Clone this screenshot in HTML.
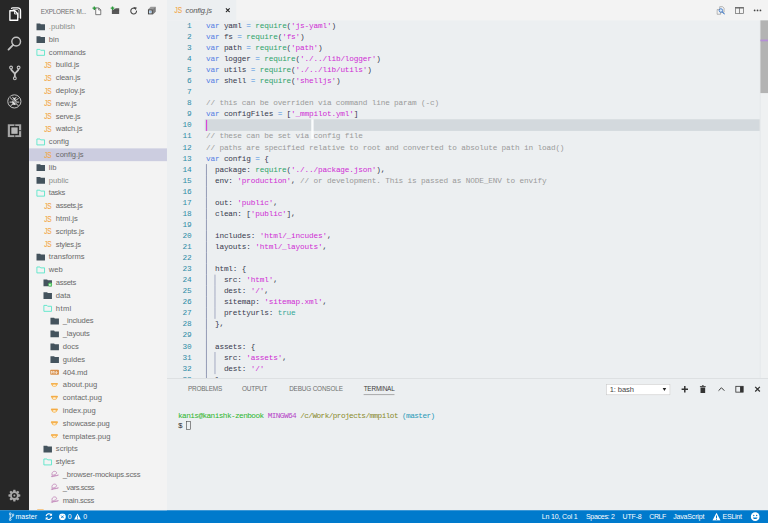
<!DOCTYPE html>
<html lang="en">
<head>
<meta charset="utf-8">
<title>config.js - mmpilot - Visual Studio Code</title>
<style>
html,body{margin:0;padding:0;background:#eceff1;overflow:hidden;}
body{width:768px;height:523px;position:relative;font-family:"Liberation Sans",sans-serif;}
#app{position:absolute;left:0;top:0;width:1320px;height:899px;transform:scale(0.581818);transform-origin:0 0;overflow:hidden;background:#eceff1;}
#app *{box-sizing:border-box;}
/* activity bar */
#act{position:absolute;left:0;top:0;width:50px;height:877px;background:#272727;}
#act svg{position:absolute;left:0;width:50px;height:50px;}
/* sidebar */
#side{position:absolute;left:50px;top:0;width:237px;z-index:2;height:877px;background:#f3f3f3;overflow:hidden;}
#side .title{position:absolute;left:20px;top:2.500px;height:35px;line-height:35px;font-size:11px;color:#6f6f6f;letter-spacing:-0.45px;}
#side .acts{position:absolute;left:0;top:0;height:35px;}
#side .acts svg{position:absolute;top:10.500px;width:16px;height:16px;overflow:visible;}
#tree{position:absolute;left:0;top:35px;width:237px;}
.row{height:22px;line-height:22px;font-size:13px;color:#696969;white-space:nowrap;position:relative;}
.row.sel{background:#cccde0;}.row.dim{color:#8a8e8a;}
.row .ic{display:inline-block;width:16px;height:22px;vertical-align:top;margin-right:6px;}
.row svg.ic{padding:3px 0;}
.row .jsic{font-size:14.500px;color:#f2a94a;letter-spacing:-0.300px;text-align:left;padding-left:2px;transform:scaleX(0.77);transform-origin:2px 50%;-webkit-text-stroke:0.200px #f2a94a;}
.row .lbl{display:inline-block;vertical-align:top;}
/* editor */
#ed{position:absolute;left:286px;top:0;width:1034px;height:650px;background:#eceff1;overflow:hidden;}
#tabs{position:absolute;left:0;top:0;width:1034px;height:35px;background:#f3f3f3;}
#tabs .tab{position:absolute;left:0;top:0;width:120px;height:35px;line-height:35px;font-size:13px;font-style:italic;color:#5a5a5a;padding-left:14px;white-space:nowrap;background:#eceff1;letter-spacing:-0.300px;}
#tabs .tab .jsic{font-style:normal;font-size:14.500px;color:#f2a94a;display:inline-block;width:16px;margin-right:3px;letter-spacing:-0.300px;transform:scaleX(0.77);transform-origin:0 50%;-webkit-text-stroke:0.200px #f2a94a;}
#tabs .close{position:absolute;left:101px;top:13px;width:9px;height:9px;}
#tabs .tacts svg{position:absolute;top:10px;width:16px;height:16px;}
#code{position:absolute;left:0;top:35.400px;width:1020px;font-family:"Liberation Mono",monospace;font-size:13.300px;letter-spacing:-0.280px;color:#383a4e;}
.ln{height:19px;line-height:19px;white-space:pre;position:relative;}
.ln.cur:before{content:"";position:absolute;left:66px;right:0;top:-1px;height:20px;background:#d3d9dd;}
.ln .n{position:absolute;left:0;top:0;width:43px;text-align:right;color:#2e8ba6;}
.ln .t{position:absolute;left:68px;top:0;}
.ln .g{position:absolute;top:0;width:1.200px;height:19px;background:#56608a;}.ln .g2{width:1.100px;background:#737aa0;}
.k{color:#5580e4}.o{color:#4a8fe0}.f{color:#2fa36b}.s{color:#cf2cd4}.c{color:#9a9a9a}.b{color:#35a896}
#cursor{position:absolute;left:68px;top:205.500px;width:2px;height:19px;background:#d946d9;}
#ibeam{position:absolute;left:248.500px;top:205px;width:4px;height:34px;background:#fafcfd;}
#vsb{position:absolute;right:0;top:35px;width:14px;height:615px;background:#eff1f2;border-left:1px solid #dfe3e5;}
#vsb .sl{position:absolute;left:0;top:0;width:14px;height:124.500px;background:#b3b3b3;}
#vsb .mk{position:absolute;left:0;top:33px;width:14px;height:3px;background:#b58fd6;}
/* panel */
#panel{position:absolute;left:286px;top:650px;width:1034px;height:227px;background:#eceff1;border-top:1px solid #d2d5d7;}
#panel .ptabs{position:absolute;left:0;top:0;height:35px;}
#panel .ptabs span{position:absolute;top:0;height:35px;line-height:35px;font-size:11px;color:#6f6f6f;white-space:nowrap;letter-spacing:-0.300px;}
#panel .ptabs span.on{color:#3c3c3c;}
#panel .ptabs span.on:after{content:"";position:absolute;left:0;right:0;bottom:7px;height:1px;background:#7a7a7a;}
#term{position:absolute;left:20px;top:56.500px;font-family:"Liberation Mono",monospace;font-size:13.300px;letter-spacing:-0.980px;line-height:16px;white-space:pre;color:#333;}
#term .box{display:inline-block;width:8.500px;height:15.500px;border:1.200px solid #444;vertical-align:-3.500px;margin-left:-0.500px;}
#sel{position:absolute;left:756px;top:9px;width:110px;height:19px;background:#fff;border:1px solid #c8c8c8;font-size:13px;line-height:17px;color:#444;padding-left:5px;letter-spacing:-0.200px;}
#sel:after{content:"";position:absolute;right:6px;top:6px;border:3.500px solid transparent;border-top:5.500px solid #222;}
#panel .pacts svg{position:absolute;top:10px;width:16px;height:16px;}
/* status */
#status{position:absolute;left:0;top:877px;width:1320px;height:22px;background:#007acc;color:#fff;font-size:12px;line-height:22px;white-space:nowrap;letter-spacing:-0.250px;}
#status span{position:absolute;top:0;}
#status svg{position:absolute;}
</style>
</head>
<body>
<div id="app">
 <div id="act">
  <svg style="top:0" viewBox="0 0 50 50"><path d="M17 18.500h8.500l5 5V34.800H17z" fill="none" stroke="#fff" stroke-width="2.300" stroke-linejoin="round"/><path d="M25 18.800v5.200h5.200" fill="none" stroke="#fff" stroke-width="1.500"/><path d="M19.800 14.200c.6-.5 1.300-.7 2.200-.7h8.300c2.900 0 5.100 2.200 5.100 5.100v12.600" fill="none" stroke="#fff" stroke-width="2" stroke-linecap="round"/><path d="M22.500 16.400h6.800c2 0 3.300 1.300 3.300 3.300v10.500" fill="none" stroke="#fff" stroke-width="1.300" stroke-linecap="round" opacity=".9"/></svg>
  <svg style="top:50px" viewBox="0 0 50 50"><circle cx="27.800" cy="21.500" r="7.500" fill="none" stroke="#c2c2c2" stroke-width="2.500"/><path d="M22.600 27L14.600 35.200" stroke="#c2c2c2" stroke-width="3.100" stroke-linecap="round"/></svg>
  <svg style="top:100px" viewBox="0 0 50 50"><g fill="none" stroke="#c2c2c2"><path d="M19 18.300c.4 5 6.500 5 6.500 9.700v4.300M32 18.300c-.4 5-6.500 5-6.500 9.700" stroke-width="3"/><circle cx="19" cy="16" r="2.400" stroke-width="1.900" fill="#272727"/><circle cx="32" cy="16" r="2.400" stroke-width="1.900" fill="#272727"/><circle cx="25.500" cy="34.600" r="2.400" stroke-width="1.900" fill="#272727"/></g></svg>
  <svg style="top:150px" viewBox="0 0 50 50"><circle cx="24.700" cy="24.300" r="11.300" fill="none" stroke="#c2c2c2" stroke-width="1.700"/><g stroke="#d8d8d8" stroke-width="1.700" fill="none"><path d="M17.500 19l5 3.500M32 19l-5 3.500M16.500 25.500h6M33 25.500h-6M18 32l4.500-3.500M31.500 32L27 28.500M21.500 16.500l2 3M28 16.500l-2 3"/></g><ellipse cx="24.700" cy="25.800" rx="3.600" ry="4.800" fill="#e0e0e0"/><circle cx="24.700" cy="20" r="2.200" fill="#e0e0e0"/><path d="M16.700 16.400l16 15.800" stroke="#272727" stroke-width="2.200"/><path d="M16.700 16.400l16 15.800" stroke="#c2c2c2" stroke-width="1.100"/></svg>
  <svg style="top:200px" viewBox="0 0 50 50"><rect x="13.400" y="13.600" width="23" height="22" fill="#a4a4a4"/><rect x="18.300" y="17.800" width="13.200" height="13.400" fill="none" stroke="#272727" stroke-width="2.400"/><rect x="20.200" y="19.700" width="9.400" height="9.600" fill="#b8b8b8"/><path d="M25.400 13.600v4M25.400 31.500v4.100M32 24.500h4.400" stroke="#272727" stroke-width="1.400"/></svg>
  <svg style="top:827px" viewBox="0 0 50 50"><g transform="translate(24.700 24.800)"><g fill="#a8a8a8"><path d="M-2.600 -6L-1.700 -10.200H1.700L2.600 -6z"/><path d="M-2.600 -6L-1.700 -10.200H1.700L2.600 -6z" transform="rotate(45)"/><path d="M-2.600 -6L-1.700 -10.200H1.700L2.600 -6z" transform="rotate(90)"/><path d="M-2.600 -6L-1.700 -10.200H1.700L2.600 -6z" transform="rotate(135)"/><path d="M-2.600 -6L-1.700 -10.200H1.700L2.600 -6z" transform="rotate(180)"/><path d="M-2.600 -6L-1.700 -10.200H1.700L2.600 -6z" transform="rotate(225)"/><path d="M-2.600 -6L-1.700 -10.200H1.700L2.600 -6z" transform="rotate(270)"/><path d="M-2.600 -6L-1.700 -10.200H1.700L2.600 -6z" transform="rotate(315)"/><circle r="7.200"/></g><circle r="4.300" fill="#272727"/><circle r="1.700" fill="#a8a8a8"/></g></svg>
 </div>
 <div id="side">
  <div class="title">EXPLORER: M...</div>
  <div class="acts">
   <svg style="left:109px" viewBox="0 0 16 16"><path d="M5.500 2.600h5.300l3.400 3.400v8.200H5.500z" fill="#fbfbfb" stroke="#555" stroke-width="1.300" stroke-linejoin="round"/><path d="M10.600 2.800v3.400h3.400" fill="none" stroke="#555" stroke-width="1.200"/><path d="M3.100 0v6.200M0 3.100h6.200" stroke="#2c9a3c" stroke-width="2.300"/></svg>
   <svg style="left:141px" viewBox="0 0 16 16"><path d="M1.300 13.100V7.200L8.200 3h5.600v10.100z" fill="#585858"/><path d="M1.300 7.400h12.500" stroke="#4a4a4a" stroke-width="0.800"/><path d="M2.400 0v6.200M-0.700 3.100h6.200" stroke="#2c9a3c" stroke-width="2.300"/></svg>
   <svg style="left:172px" viewBox="0 0 16 16"><path d="M10.500 3.800A5 5 0 1 0 12.700 7.300" fill="none" stroke="#484848" stroke-width="1.900"/><path d="M7.400 1l5.600.8-1.600 4.800z" fill="#484848"/></svg>
   <svg style="left:203px" viewBox="0 0 16 16"><path d="M1.300 5.300l4.600-4.600h8.500v8.600l-4.600 4.500z" fill="#9a9a9a"/><path d="M9.400 5.300l5-4.600v8.600l-5 4.500z" fill="#7d7d7d"/><rect x="1.300" y="5.300" width="8.100" height="8.400" fill="#444"/><rect x="3" y="7" width="4.700" height="5" fill="#fff"/><path d="M3.600 9.500h3.500" stroke="#2f7fd0" stroke-width="1.500"/></svg>
  </div>
  <div style="position:absolute;left:14px;top:875.300px;width:11px;height:1.700px;background:#f5c27e"></div>
  <div id="tree">
<div class="row dim" style="padding-left:12px"><svg class="ic" viewBox="0 0 16 16"><path d="M0.700 2.200h6.300l1.200 1.400h7.100V13.800H0.700z" fill="#44535d"/></svg><span class="lbl">.publish</span></div>
<div class="row" style="padding-left:12px"><svg class="ic" viewBox="0 0 16 16"><path d="M0.700 2.200h6.300l1.200 1.400h7.100V13.800H0.700z" fill="#44535d"/></svg><span class="lbl">bin</span></div>
<div class="row" style="padding-left:12px"><svg class="ic" viewBox="0 0 16 16"><path d="M1.400 2.900h5.300l1.200 1.500h6.700V13.100H1.400z" fill="none" stroke="#5ce6ca" stroke-width="1.600" stroke-linejoin="round"/></svg><span class="lbl">commands</span></div>
<div class="row" style="padding-left:24px"><span class="ic jsic">JS</span><span class="lbl">build.js</span></div>
<div class="row" style="padding-left:24px"><span class="ic jsic">JS</span><span class="lbl" style="letter-spacing:-0.25px">clean.js</span></div>
<div class="row" style="padding-left:24px"><span class="ic jsic">JS</span><span class="lbl">deploy.js</span></div>
<div class="row" style="padding-left:24px"><span class="ic jsic">JS</span><span class="lbl">new.js</span></div>
<div class="row" style="padding-left:24px"><span class="ic jsic">JS</span><span class="lbl" style="letter-spacing:-0.34px">serve.js</span></div>
<div class="row" style="padding-left:24px"><span class="ic jsic">JS</span><span class="lbl" style="letter-spacing:-0.18px">watch.js</span></div>
<div class="row" style="padding-left:12px"><svg class="ic" viewBox="0 0 16 16"><path d="M1.400 2.900h5.300l1.200 1.500h6.700V13.100H1.400z" fill="none" stroke="#5ce6ca" stroke-width="1.600" stroke-linejoin="round"/></svg><span class="lbl">config</span></div>
<div class="row sel" style="padding-left:24px"><span class="ic jsic">JS</span><span class="lbl">config.js</span></div>
<div class="row" style="padding-left:12px"><svg class="ic" viewBox="0 0 16 16"><path d="M0.700 2.200h6.300l1.200 1.400h7.100V13.800H0.700z" fill="#44535d"/></svg><span class="lbl">lib</span></div>
<div class="row dim" style="padding-left:12px"><svg class="ic" viewBox="0 0 16 16"><path d="M0.700 2.200h6.300l1.200 1.400h7.100V13.800H0.700z" fill="#44535d"/></svg><span class="lbl">public</span></div>
<div class="row" style="padding-left:12px"><svg class="ic" viewBox="0 0 16 16"><path d="M1.400 2.900h5.300l1.200 1.500h6.700V13.100H1.400z" fill="none" stroke="#5ce6ca" stroke-width="1.600" stroke-linejoin="round"/></svg><span class="lbl" style="letter-spacing:-0.49px">tasks</span></div>
<div class="row" style="padding-left:24px"><span class="ic jsic">JS</span><span class="lbl" style="letter-spacing:-0.56px">assets.js</span></div>
<div class="row" style="padding-left:24px"><span class="ic jsic">JS</span><span class="lbl">html.js</span></div>
<div class="row" style="padding-left:24px"><span class="ic jsic">JS</span><span class="lbl" style="letter-spacing:-0.2px">scripts.js</span></div>
<div class="row" style="padding-left:24px"><span class="ic jsic">JS</span><span class="lbl" style="letter-spacing:-0.36px">styles.js</span></div>
<div class="row" style="padding-left:12px"><svg class="ic" viewBox="0 0 16 16"><path d="M0.700 2.200h6.300l1.200 1.400h7.100V13.800H0.700z" fill="#44535d"/></svg><span class="lbl">transforms</span></div>
<div class="row" style="padding-left:12px"><svg class="ic" viewBox="0 0 16 16"><path d="M1.400 2.900h5.300l1.200 1.500h6.700V13.100H1.400z" fill="none" stroke="#5ce6ca" stroke-width="1.600" stroke-linejoin="round"/></svg><span class="lbl">web</span></div>
<div class="row" style="padding-left:24px"><svg class="ic" viewBox="0 0 16 16"><path d="M0.700 2.200h6.300l1.200 1.400h7.100V13.800H0.700z" fill="#44535d"/><circle cx="12.300" cy="11.200" r="3.600" fill="#55c763"/><circle cx="11.800" cy="11.600" r="1.500" fill="#eefaf0"/></svg><span class="lbl" style="letter-spacing:-0.53px">assets</span></div>
<div class="row" style="padding-left:24px"><svg class="ic" viewBox="0 0 16 16"><path d="M0.700 2.200h6.300l1.200 1.400h7.100V13.800H0.700z" fill="#44535d"/></svg><span class="lbl">data</span></div>
<div class="row" style="padding-left:24px"><svg class="ic" viewBox="0 0 16 16"><path d="M1.400 2.900h5.300l1.200 1.500h6.700V13.100H1.400z" fill="none" stroke="#5ce6ca" stroke-width="1.600" stroke-linejoin="round"/></svg><span class="lbl" style="letter-spacing:0.64px">html</span></div>
<div class="row" style="padding-left:36px"><svg class="ic" viewBox="0 0 16 16"><path d="M0.700 2.200h6.300l1.200 1.400h7.100V13.800H0.700z" fill="#44535d"/></svg><span class="lbl" style="letter-spacing:-0.28px">_includes</span></div>
<div class="row" style="padding-left:36px"><svg class="ic" viewBox="0 0 16 16"><path d="M0.700 2.200h6.300l1.200 1.400h7.100V13.800H0.700z" fill="#44535d"/></svg><span class="lbl" style="letter-spacing:-0.3px">_layouts</span></div>
<div class="row" style="padding-left:36px"><svg class="ic" viewBox="0 0 16 16"><path d="M0.700 2.200h6.300l1.200 1.400h7.100V13.800H0.700z" fill="#44535d"/></svg><span class="lbl">docs</span></div>
<div class="row" style="padding-left:36px"><svg class="ic" viewBox="0 0 16 16"><path d="M0.700 2.200h6.300l1.200 1.400h7.100V13.800H0.700z" fill="#44535d"/></svg><span class="lbl">guides</span></div>
<div class="row" style="padding-left:36px"><svg class="ic" viewBox="0 0 16 16"><rect x="0.300" y="3.700" width="15" height="8.600" rx="1.300" fill="#d9914c"/><path d="M2.800 10.200V5.900l2 2.300 2-2.300v4.300M10.800 5.800v3.800M8.900 8l1.900 2.100L12.700 8" stroke="#fff" stroke-width="1.300" fill="none"/></svg><span class="lbl" style="letter-spacing:-0.21px">404.md</span></div>
<div class="row" style="padding-left:36px"><svg class="ic" viewBox="0 0 16 16"><path d="M1.500 5.200c0-.7.400-1 1.200-1h9.600c.8 0 1.200.3 1.200 1v1.300c0 .6-.5.900-1.300 1-.3 2.200-1.900 3.700-4.700 3.700s-4.400-1.500-4.700-3.700c-.8-.1-1.300-.4-1.300-1z" fill="#f7ba5e"/><path d="M2 5h11v1.200H2z" fill="#f2a640"/><ellipse cx="7.500" cy="8.400" rx="2.600" ry="1.500" fill="#fdeccd"/></svg><span class="lbl" style="letter-spacing:0.16px">about.pug</span></div>
<div class="row" style="padding-left:36px"><svg class="ic" viewBox="0 0 16 16"><path d="M1.500 5.200c0-.7.400-1 1.200-1h9.600c.8 0 1.200.3 1.200 1v1.300c0 .6-.5.900-1.300 1-.3 2.200-1.900 3.700-4.700 3.700s-4.400-1.500-4.700-3.700c-.8-.1-1.300-.4-1.300-1z" fill="#f7ba5e"/><path d="M2 5h11v1.200H2z" fill="#f2a640"/><ellipse cx="7.500" cy="8.400" rx="2.600" ry="1.500" fill="#fdeccd"/></svg><span class="lbl">contact.pug</span></div>
<div class="row" style="padding-left:36px"><svg class="ic" viewBox="0 0 16 16"><path d="M1.500 5.200c0-.7.400-1 1.200-1h9.600c.8 0 1.200.3 1.200 1v1.300c0 .6-.5.900-1.300 1-.3 2.200-1.900 3.700-4.700 3.700s-4.400-1.500-4.700-3.700c-.8-.1-1.300-.4-1.300-1z" fill="#f7ba5e"/><path d="M2 5h11v1.200H2z" fill="#f2a640"/><ellipse cx="7.500" cy="8.400" rx="2.600" ry="1.500" fill="#fdeccd"/></svg><span class="lbl">index.pug</span></div>
<div class="row" style="padding-left:36px"><svg class="ic" viewBox="0 0 16 16"><path d="M1.500 5.200c0-.7.400-1 1.200-1h9.600c.8 0 1.200.3 1.200 1v1.300c0 .6-.5.900-1.300 1-.3 2.200-1.900 3.700-4.700 3.700s-4.400-1.500-4.700-3.700c-.8-.1-1.300-.4-1.300-1z" fill="#f7ba5e"/><path d="M2 5h11v1.200H2z" fill="#f2a640"/><ellipse cx="7.500" cy="8.400" rx="2.600" ry="1.500" fill="#fdeccd"/></svg><span class="lbl" style="letter-spacing:-0.23px">showcase.pug</span></div>
<div class="row" style="padding-left:36px"><svg class="ic" viewBox="0 0 16 16"><path d="M1.500 5.200c0-.7.400-1 1.200-1h9.600c.8 0 1.200.3 1.200 1v1.300c0 .6-.5.900-1.300 1-.3 2.200-1.900 3.700-4.700 3.700s-4.400-1.500-4.700-3.700c-.8-.1-1.300-.4-1.300-1z" fill="#f7ba5e"/><path d="M2 5h11v1.200H2z" fill="#f2a640"/><ellipse cx="7.500" cy="8.400" rx="2.600" ry="1.500" fill="#fdeccd"/></svg><span class="lbl">templates.pug</span></div>
<div class="row" style="padding-left:24px"><svg class="ic" viewBox="0 0 16 16"><path d="M0.700 2.200h6.300l1.200 1.400h7.100V13.800H0.700z" fill="#44535d"/></svg><span class="lbl">scripts</span></div>
<div class="row" style="padding-left:24px"><svg class="ic" viewBox="0 0 16 16"><path d="M1.400 2.900h5.300l1.200 1.500h6.700V13.100H1.400z" fill="none" stroke="#5ce6ca" stroke-width="1.600" stroke-linejoin="round"/></svg><span class="lbl" style="letter-spacing:-0.17px">styles</span></div>
<div class="row" style="padding-left:36px"><svg class="ic" viewBox="0 0 16 16"><path d="M3.400 7.600C2.300 5.200 4.700 2 7.800 2.100c2.500.1 4 1.700 3.300 3.500C10.500 7.200 8.200 7.900 6.300 8.200" stroke="#c48cbc" stroke-width="1.500" fill="none" stroke-linecap="round"/><path d="M3.400 7.600c.9 1.200 .4 2.300-1 3.500 3-1.700 7.500-1.300 12-2.600-3.800 1.900-8.300 1.300-11.200 3.100" stroke="#c48cbc" stroke-width="1.300" fill="#c48cbc" stroke-linejoin="round"/></svg><span class="lbl" style="letter-spacing:-0.3px">_browser-mockups.scss</span></div>
<div class="row" style="padding-left:36px"><svg class="ic" viewBox="0 0 16 16"><path d="M3.400 7.600C2.300 5.200 4.700 2 7.800 2.100c2.500.1 4 1.700 3.300 3.500C10.500 7.200 8.200 7.900 6.300 8.200" stroke="#c48cbc" stroke-width="1.500" fill="none" stroke-linecap="round"/><path d="M3.400 7.600c.9 1.200 .4 2.300-1 3.500 3-1.700 7.500-1.300 12-2.600-3.800 1.900-8.300 1.300-11.200 3.100" stroke="#c48cbc" stroke-width="1.300" fill="#c48cbc" stroke-linejoin="round"/></svg><span class="lbl" style="letter-spacing:-0.77px">_vars.scss</span></div>
<div class="row" style="padding-left:36px"><svg class="ic" viewBox="0 0 16 16"><path d="M3.400 7.600C2.300 5.200 4.700 2 7.800 2.100c2.500.1 4 1.700 3.300 3.500C10.500 7.200 8.200 7.900 6.300 8.200" stroke="#c48cbc" stroke-width="1.500" fill="none" stroke-linecap="round"/><path d="M3.400 7.600c.9 1.200 .4 2.300-1 3.500 3-1.700 7.500-1.300 12-2.600-3.800 1.900-8.300 1.300-11.200 3.100" stroke="#c48cbc" stroke-width="1.300" fill="#c48cbc" stroke-linejoin="round"/></svg><span class="lbl" style="letter-spacing:-0.46px">main.scss</span></div>
  </div>
 </div>
 <div id="ed">
  <div id="tabs">
   <div class="tab"><span class="jsic">JS</span>config.js</div>
   <svg class="close" viewBox="0 0 11 11"><path d="M1.500 1.500l8 8M9.500 1.500l-8 8" stroke="#222" stroke-width="2.200"/></svg>
   <div class="tacts">
    <svg style="left:945px" viewBox="0 0 16 16"><path d="M6 1.500h5l2.500 2.500v7H6z" fill="#f3f3f3" stroke="#888" stroke-width="1"/><path d="M1.500 6.500h6v8h-6z" fill="#f3f3f3" stroke="#888" stroke-width="1"/><circle cx="8" cy="8" r="3" fill="#dfeaf7" stroke="#3c78c8" stroke-width="1.500"/><path d="M10.200 10.200l4.300 4.300" stroke="#3c78c8" stroke-width="1.800"/></svg>
    <svg style="left:977px" viewBox="0 0 16 16"><rect x="1" y="2.800" width="14" height="10.400" fill="none" stroke="#666" stroke-width="1.200"/><path d="M1 3.500h14" stroke="#666" stroke-width="2"/><path d="M8 3v10" stroke="#666" stroke-width="1.300"/></svg>
    <svg style="left:1008px" viewBox="0 0 16 16"><circle cx="3" cy="8" r="1.500" fill="#444"/><circle cx="8" cy="8" r="1.500" fill="#444"/><circle cx="13" cy="8" r="1.500" fill="#444"/></svg>
   </div>
  </div>
  <div id="code">
<div class="ln"><span class="n">1</span><span class="t"><span class="k">var</span> yaml <span class="o">=</span> <span class="f">require</span>(<span class="s">'js-yaml'</span>)</span></div>
<div class="ln"><span class="n">2</span><span class="t"><span class="k">var</span> fs <span class="o">=</span> <span class="f">require</span>(<span class="s">'fs'</span>)</span></div>
<div class="ln"><span class="n">3</span><span class="t"><span class="k">var</span> path <span class="o">=</span> <span class="f">require</span>(<span class="s">'path'</span>)</span></div>
<div class="ln"><span class="n">4</span><span class="t"><span class="k">var</span> logger <span class="o">=</span> <span class="f">require</span>(<span class="s">'./../lib/logger'</span>)</span></div>
<div class="ln"><span class="n">5</span><span class="t"><span class="k">var</span> utils <span class="o">=</span> <span class="f">require</span>(<span class="s">'./../lib/utils'</span>)</span></div>
<div class="ln"><span class="n">6</span><span class="t"><span class="k">var</span> shell <span class="o">=</span> <span class="f">require</span>(<span class="s">'shelljs'</span>)</span></div>
<div class="ln"><span class="n">7</span><span class="t"></span></div>
<div class="ln"><span class="n">8</span><span class="t"><span class="c">// this can be overriden via command line param (-c)</span></span></div>
<div class="ln"><span class="n">9</span><span class="t"><span class="k">var</span> configFiles <span class="o">=</span> [<span class="s">'_mmpilot.yml'</span>]</span></div>
<div class="ln cur"><span class="n">10</span><span class="t"></span></div>
<div class="ln"><span class="n">11</span><span class="t"><span class="c">// these can be set via config file</span></span></div>
<div class="ln"><span class="n">12</span><span class="t"><span class="c">// paths are specified relative to root and converted to absolute path in load()</span></span></div>
<div class="ln"><span class="n">13</span><span class="t"><span class="k">var</span> config <span class="o">=</span> {</span></div>
<div class="ln"><span class="n">14</span><i class="g g0" style="left:68.0px"></i><span class="t">  package: <span class="f">require</span>(<span class="s">'./../package.json'</span>),</span></div>
<div class="ln"><span class="n">15</span><i class="g g0" style="left:68.0px"></i><span class="t">  env: <span class="s">'production'</span>, <span class="c">// or development. This is passed as NODE_ENV to envify</span></span></div>
<div class="ln"><span class="n">16</span><i class="g g0" style="left:68.0px"></i><span class="t"></span></div>
<div class="ln"><span class="n">17</span><i class="g g0" style="left:68.0px"></i><span class="t">  out: <span class="s">'public'</span>,</span></div>
<div class="ln"><span class="n">18</span><i class="g g0" style="left:68.0px"></i><span class="t">  clean: [<span class="s">'public'</span>],</span></div>
<div class="ln"><span class="n">19</span><i class="g g0" style="left:68.0px"></i><span class="t"></span></div>
<div class="ln"><span class="n">20</span><i class="g g0" style="left:68.0px"></i><span class="t">  includes: <span class="s">'html/_incudes'</span>,</span></div>
<div class="ln"><span class="n">21</span><i class="g g0" style="left:68.0px"></i><span class="t">  layouts: <span class="s">'html/_layouts'</span>,</span></div>
<div class="ln"><span class="n">22</span><i class="g g0" style="left:68.0px"></i><span class="t"></span></div>
<div class="ln"><span class="n">23</span><i class="g g0" style="left:68.0px"></i><span class="t">  html: {</span></div>
<div class="ln"><span class="n">24</span><i class="g g0" style="left:68.0px"></i><i class="g g2" style="left:83.4px"></i><span class="t">    src: <span class="s">'html'</span>,</span></div>
<div class="ln"><span class="n">25</span><i class="g g0" style="left:68.0px"></i><i class="g g2" style="left:83.4px"></i><span class="t">    dest: <span class="s">'/'</span>,</span></div>
<div class="ln"><span class="n">26</span><i class="g g0" style="left:68.0px"></i><i class="g g2" style="left:83.4px"></i><span class="t">    sitemap: <span class="s">'sitemap.xml'</span>,</span></div>
<div class="ln"><span class="n">27</span><i class="g g0" style="left:68.0px"></i><i class="g g2" style="left:83.4px"></i><span class="t">    prettyurls: <span class="b">true</span></span></div>
<div class="ln"><span class="n">28</span><i class="g g0" style="left:68.0px"></i><span class="t">  },</span></div>
<div class="ln"><span class="n">29</span><i class="g g0" style="left:68.0px"></i><span class="t"></span></div>
<div class="ln"><span class="n">30</span><i class="g g0" style="left:68.0px"></i><span class="t">  assets: {</span></div>
<div class="ln"><span class="n">31</span><i class="g g0" style="left:68.0px"></i><i class="g g2" style="left:83.4px"></i><span class="t">    src: <span class="s">'assets'</span>,</span></div>
<div class="ln"><span class="n">32</span><i class="g g0" style="left:68.0px"></i><i class="g g2" style="left:83.4px"></i><span class="t">    dest: <span class="s">'/'</span></span></div>
<div class="ln"><span class="n">33</span><i class="g g0" style="left:68.0px"></i><span class="t">  },</span></div>
<div class="ln"><span class="n">34</span><span class="t"></span></div>
  </div>
  <div id="cursor"></div>
  <div id="ibeam"></div>
  <div id="vsb"><div class="sl"></div><div class="mk"></div></div>
 </div>
 <div id="panel">
  <div class="ptabs">
   <span style="left:37px">PROBLEMS</span>
   <span style="left:130px">OUTPUT</span>
   <span style="left:211px">DEBUG CONSOLE</span>
   <span class="on" style="left:339px">TERMINAL</span>
  </div>
  <div id="sel">1: bash</div>
  <div class="pacts">
   <svg style="left:882.500px" viewBox="0 0 16 16"><path d="M8 2.500v11M2.500 8h11" stroke="#333" stroke-width="2.600"/></svg>
   <svg style="left:913.500px" viewBox="0 0 16 16"><path d="M4 5h8v9.500H4z" fill="#333"/><path d="M3 3.500h10" stroke="#333" stroke-width="1.600"/><path d="M6.500 2h3" stroke="#333" stroke-width="1.600"/></svg>
   <svg style="left:945.500px" viewBox="0 0 16 16"><path d="M3 10.500l5-5 5 5" fill="none" stroke="#333" stroke-width="1.700"/></svg>
   <svg style="left:976.500px" viewBox="0 0 16 16"><rect x="1.700" y="3" width="12.600" height="10" fill="none" stroke="#333" stroke-width="1.400"/><rect x="9" y="3" width="5.300" height="10" fill="#333"/></svg>
   <svg style="left:1008px" viewBox="0 0 16 16"><path d="M4 4l8 8M12 4l-8 8" stroke="#333" stroke-width="2.200"/></svg>
  </div>
  <div id="term"><span style="color:#2db52d">kanis@kanishk-zenbook</span> <span style="color:#b545c8">MINGW64</span> <span style="color:#8a8a2a">/c/Work/projects/mmpilot</span> <span style="color:#2a9ab8">(master)</span>
$ <span class="box"></span></div>
 </div>
 <div id="status">
  <svg style="left:14.500px;top:3px;width:10px;height:16px" viewBox="0 0 10 16"><g fill="none" stroke="#fff" stroke-width="1.300"><circle cx="2.500" cy="3" r="1.600"/><circle cx="2.500" cy="13" r="1.600"/><circle cx="7.500" cy="5" r="1.600"/><path d="M2.500 4.600v6.800M7.500 6.600c0 2.500-5 2-5 4.500"/></g></svg>
  <span style="left:26.500px;letter-spacing:0.100px">master</span>
  <svg style="left:76.500px;top:4px;width:14px;height:14px" viewBox="0 0 14 14"><g fill="none" stroke="#fff" stroke-width="2"><path d="M2.200 6A5 5 0 0 1 11 4"/><path d="M11.800 8A5 5 0 0 1 3 10"/></g><path d="M12.500 1v4.500H8zM1.500 13V8.500H6z" fill="#fff"/></svg>
  <svg style="left:101px;top:4.500px;width:12.500px;height:12.500px" viewBox="0 0 14 14"><circle cx="7" cy="7" r="6.500" fill="#fff"/><path d="M4.500 4.500l5 5M9.500 4.500l-5 5" stroke="#007acc" stroke-width="1.700"/></svg>
  <span style="left:116.500px">0</span>
  <svg style="left:127px;top:5px;width:12.500px;height:11.500px" viewBox="0 0 15 14"><path d="M7.500 0.500L14.500 13.500H0.500z" fill="#fff"/><path d="M7.500 5v4.500M7.500 10.500v1.800" stroke="#007acc" stroke-width="1.700"/></svg>
  <span style="left:143px">0</span>
  <span style="left:931px">Ln 10, Col 1</span>
  <span style="left:1007px;letter-spacing:-0.450px">Spaces: 2</span>
  <span style="left:1070px">UTF-8</span>
  <span style="left:1116px;letter-spacing:-0.800px">CRLF</span>
  <span style="left:1157px">JavaScript</span>
  <svg style="left:1224px;top:4px;width:15px;height:14px" viewBox="0 0 15 14"><path d="M7.500 0.500L14.500 13.500H0.500z" fill="#fff"/><path d="M7.500 5v4.500M7.500 10.500v1.800" stroke="#007acc" stroke-width="1.700"/></svg>
  <span style="left:1242px;letter-spacing:-0.450px">ESLint</span>
  <svg style="left:1290px;top:3px;width:16px;height:16px" viewBox="0 0 16 16"><circle cx="8" cy="8" r="7.500" fill="#fff"/><circle cx="5.500" cy="6" r="1.200" fill="#007acc"/><circle cx="10.500" cy="6" r="1.200" fill="#007acc"/><path d="M4 9.500c1 3.500 7 3.500 8 0z" fill="#007acc"/></svg>
 </div>
</div>
</body>
</html>
